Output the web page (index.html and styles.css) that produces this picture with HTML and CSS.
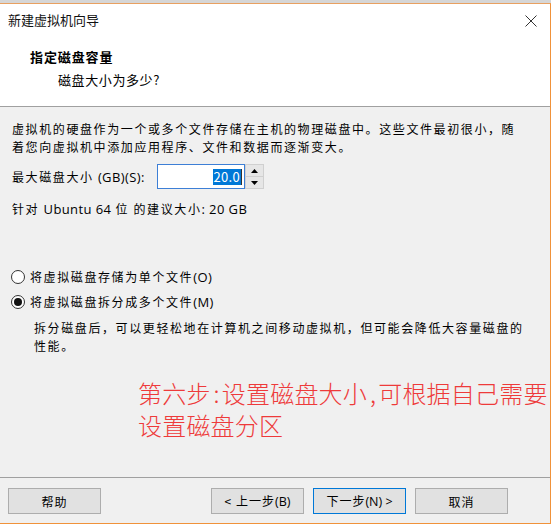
FILE: index.html
```html
<!DOCTYPE html>
<html lang="zh-CN">
<head>
<meta charset="utf-8">
<link rel="stylesheet" href="styles.css">
</head>
<body>
<div class="topstrip"></div>
<div class="window">
  <div class="header">
    <div class="titlebar">
      <span class="title">新建虚拟机向导</span>
      <svg class="close" width="12" height="12" viewBox="0 0 12 12"><path d="M0.5 0.5 L11.5 11.5 M11.5 0.5 L0.5 11.5" stroke="#333" stroke-width="1" fill="none"/></svg>
    </div>
    <div class="heading">指定磁盘容量</div>
    <div class="subheading">磁盘大小为多少?</div>
  </div>
  <div class="body">
    <p class="intro">虚拟机的硬盘作为一个或多个文件存储在主机的物理磁盘中。这些文件最初很小，随<br>着您向虚拟机中添加应用程序、文件和数据而逐渐变大。</p>
    <div class="size-row">
      <span class="label">最大磁盘大小 <span class="lat">(GB)(S):</span></span>
      <div class="spin">
        <div class="input"><span class="sel">20.0</span><span class="caret"></span></div>
        <div class="arrows">
          <div class="arrow"><svg width="7" height="4" viewBox="0 0 7 4"><path d="M3.5 0 L7 4 L0 4 Z" fill="#000"/></svg></div>
          <div class="arrow"><svg width="7" height="4" viewBox="0 0 7 4"><path d="M0 0 L7 0 L3.5 4 Z" fill="#000"/></svg></div>
        </div>
      </div>
    </div>
    <p class="recommend">针对 <span class="lat">Ubuntu 64</span> 位 的建议大小<span class="lat">: 20 GB</span></p>
    <div class="radio first"><span class="circle"></span><span>将虚拟磁盘存储为单个文件<span class="lat">(O)</span></span></div>
    <div class="radio second"><span class="circle checked"></span><span>将虚拟磁盘拆分成多个文件<span class="lat">(M)</span></span></div>
    <p class="note">拆分磁盘后，可以更轻松地在计算机之间移动虚拟机，但可能会降低大容量磁盘的<br>性能。</p>
    <div class="annotation">第六步<span class="punct">:</span>设置磁盘大小<span class="punct">,</span>可根据自己需要<br>设置磁盘分区</div>
  </div>
  <div class="footer">
    <button class="btn">帮助</button>
    <div class="spacer"></div>
    <button class="btn">&lt; 上一步<span class="lat">(B)</span></button>
    <button class="btn default">下一步<span class="lat">(N) &gt;</span></button>
    <button class="btn">取消</button>
  </div>
</div>
</body>
</html>
```
FILE: styles.css
```css
* { box-sizing: border-box; }
html, body { margin: 0; padding: 0; background: #ffffff; }
body {
  width: 554px;
  height: 526px;
  overflow: hidden;
  font-family: "Noto Sans CJK SC", "Microsoft YaHei", sans-serif;
  font-size: 12px;
  color: #000;
}
.topstrip { height: 3px; background: #d6d6d6; width: 551px; }
.window {
  width: 551px;
  height: 521px;
  border-top: 1px solid #e8a060;
  border-right: 1px solid #f0923a;
  border-bottom: 1px solid #f0923a;
  background: #f0f0f0;
  display: flex;
  flex-direction: column;
}
.header {
  height: 103px;
  background: #fff;
  border-bottom: 1px solid #a0a0a0;
}
.titlebar {
  height: 32px;
  display: flex;
  align-items: center;
  justify-content: space-between;
  padding: 0 13px 0 8px;
}
.title { font-size: 13px; line-height: 32px; color: #111; }
.close { display: block; margin-top: 2px; }
.heading {
  margin-top: 11px;
  padding-left: 30px;
  font-size: 13px;
  font-weight: bold;
  line-height: 20px;
  letter-spacing: 0.9px;
}
.subheading {
  margin-top: 3px;
  padding-left: 58px;
  font-size: 13px;
  line-height: 20px;
  letter-spacing: 0.6px;
}
.body {
  height: 371px;
  border-bottom: 1px solid #a0a0a0;
  padding: 13px 0 0 12px;
}
p { margin: 0; }
.intro, .note, .recommend, .label, .radio {
  line-height: 18px;
  letter-spacing: 1.6px;
}
.lat {
  font-family: "Open Sans", "Noto Sans", sans-serif;
  font-size: 13px;
  letter-spacing: 0.4px;
  font-weight: 500;
}
.size-row {
  display: flex;
  align-items: center;
  margin-top: 8px;
  height: 25px;
}
.label { width: 145px; white-space: nowrap; }
.spin { display: flex; height: 25px; }
.input {
  width: 88px;
  height: 25px;
  background: #fff;
  border: 1px solid #3d7fd6;
  display: flex;
  align-items: center;
  justify-content: flex-end;
  padding-right: 2px;
}
.sel {
  background: #0078d7;
  color: #fff;
  font-size: 13px;
  line-height: 16px;
  padding: 0 1px;
  letter-spacing: 0.3px;
}
.caret { width: 1px; height: 16px; background: #333; }
.arrows {
  width: 19px;
  display: flex;
  flex-direction: column;
  gap: 1px;
  background: #d0d0d0;
  padding: 1px;
}
.arrow {
  flex: 1;
  background: #e6e6e6;
  display: flex;
  align-items: center;
  justify-content: center;
}
.arrow svg { display: block; }
.recommend { margin-top: 11px; }
.radio {
  display: flex;
  align-items: center;
  gap: 5px;
  margin-left: -1px;
}
.radio.first { margin-top: 50px; }
.radio.second { margin-top: 7px; }
.circle {
  width: 14px;
  height: 14px;
  border-radius: 50%;
  border: 1px solid #333;
  background: #fff;
  display: flex;
  align-items: center;
  justify-content: center;
}
.circle.checked::after {
  content: "";
  width: 8px;
  height: 8px;
  border-radius: 50%;
  background: #111;
}
.note { margin-top: 8px; padding-left: 22px; }
.annotation {
  margin-top: 22px;
  margin-left: 126px;
  color: #ee3a3a;
  font-size: 24px;
  line-height: 32px;
  font-weight: 300;
  letter-spacing: 0.2px;
  white-space: nowrap;
}
.punct { padding: 0 2px 0 3px; }
.footer {
  flex: 1;
  display: flex;
  align-items: flex-start;
  padding: 10px 0 0 8px;
  gap: 9px;
}
.spacer { width: 92px; }
.btn {
  width: 93px;
  height: 26px;
  background: #e1e1e1;
  border: 1px solid #adadad;
  font-family: "Noto Sans CJK SC", sans-serif;
  font-size: 12px;
  letter-spacing: 1px;
  color: #000;
  padding: 0;
}
.btn .lat { font-size: 12.5px; letter-spacing: 0; }
.btn.default { border: 1px solid #0078d7; }
```
